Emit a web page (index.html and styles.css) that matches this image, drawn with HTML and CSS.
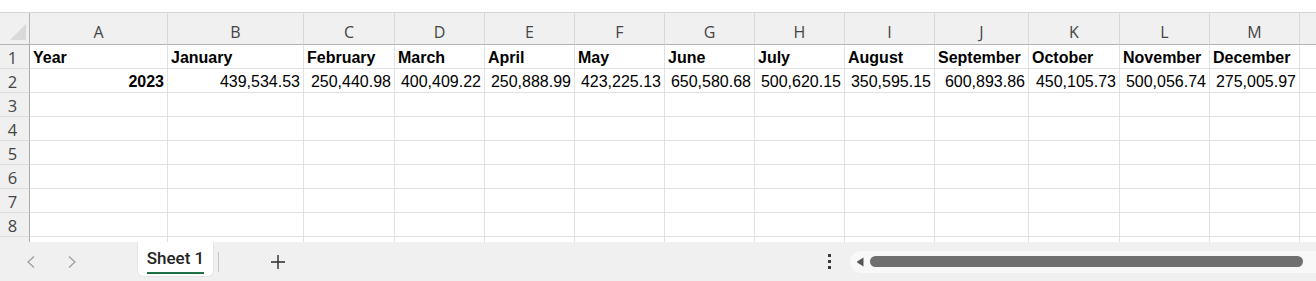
FILE: index.html
```html
<!DOCTYPE html>
<html lang="en">
<head>
  <meta charset="UTF-8" />
  <title>Sheet 1</title>
  <link rel="stylesheet" href="styles.css">
</head>
<body>

  <div class="sheet">
    <div class="grid">
      <!-- column letters -->
      <div class="grid-row head-row">
        <div class="corner">
          <svg width="16" height="16" viewBox="0 0 16 16"><polygon points="16,0 16,16 0,16" fill="#d9d9d9"/></svg>
        </div>
        <div>A</div><div>B</div><div>C</div><div>D</div><div>E</div><div>F</div><div>G</div>
        <div>H</div><div>I</div><div>J</div><div>K</div><div>L</div><div>M</div><div></div>
      </div>

      <div class="grid-row">
        <div class="rh">1</div>
        <div class="bold">Year</div>
        <div class="bold">January</div>
        <div class="bold">February</div>
        <div class="bold">March</div>
        <div class="bold">April</div>
        <div class="bold">May</div>
        <div class="bold">June</div>
        <div class="bold">July</div>
        <div class="bold">August</div>
        <div class="bold">September</div>
        <div class="bold">October</div>
        <div class="bold">November</div>
        <div class="bold">December</div>
        <div></div>
      </div>

      <div class="grid-row">
        <div class="rh">2</div>
        <div class="bold num">2023</div>
        <div class="num">439,534.53</div>
        <div class="num">250,440.98</div>
        <div class="num">400,409.22</div>
        <div class="num">250,888.99</div>
        <div class="num">423,225.13</div>
        <div class="num">650,580.68</div>
        <div class="num">500,620.15</div>
        <div class="num">350,595.15</div>
        <div class="num">600,893.86</div>
        <div class="num">450,105.73</div>
        <div class="num">500,056.74</div>
        <div class="num">275,005.97</div>
        <div></div>
      </div>

      <div class="grid-row">
        <div class="rh">3</div>
        <div></div><div></div><div></div><div></div><div></div><div></div><div></div>
        <div></div><div></div><div></div><div></div><div></div><div></div><div></div>
      </div>
      <div class="grid-row">
        <div class="rh">4</div>
        <div></div><div></div><div></div><div></div><div></div><div></div><div></div>
        <div></div><div></div><div></div><div></div><div></div><div></div><div></div>
      </div>
      <div class="grid-row">
        <div class="rh">5</div>
        <div></div><div></div><div></div><div></div><div></div><div></div><div></div>
        <div></div><div></div><div></div><div></div><div></div><div></div><div></div>
      </div>
      <div class="grid-row">
        <div class="rh">6</div>
        <div></div><div></div><div></div><div></div><div></div><div></div><div></div>
        <div></div><div></div><div></div><div></div><div></div><div></div><div></div>
      </div>
      <div class="grid-row">
        <div class="rh">7</div>
        <div></div><div></div><div></div><div></div><div></div><div></div><div></div>
        <div></div><div></div><div></div><div></div><div></div><div></div><div></div>
      </div>
      <div class="grid-row">
        <div class="rh">8</div>
        <div></div><div></div><div></div><div></div><div></div><div></div><div></div>
        <div></div><div></div><div></div><div></div><div></div><div></div><div></div>
      </div>
      <!-- row 9, cut off by the tab bar -->
      <div class="grid-row cut-row">
        <div class="rh"></div>
        <div></div><div></div><div></div><div></div><div></div><div></div><div></div>
        <div></div><div></div><div></div><div></div><div></div><div></div><div></div>
      </div>
    </div>

    <!-- sheet tabs + horizontal scroll -->
    <div class="tabbar">
      <div class="nav">
        <svg width="8" height="12" viewBox="0 0 8 12"><polyline points="7,0.5 1,6 7,11.5" fill="none" stroke="#9b9b9b" stroke-width="1.2"/></svg>
        <svg width="8" height="12" viewBox="0 0 8 12"><polyline points="1,0.5 7,6 1,11.5" fill="none" stroke="#9b9b9b" stroke-width="1.2"/></svg>
      </div>
      <div class="tab"><span>Sheet 1</span></div>
      <div class="tab-sep"></div>
      <div class="add-sheet">
        <svg width="14" height="14" viewBox="0 0 14 14"><path d="M7 0v14M0 7h14" stroke="#2b2b2b" stroke-width="1.4"/></svg>
      </div>
      <div class="more">
        <svg width="3" height="15" viewBox="0 0 3 15"><rect x="0" y="0" width="3" height="3" fill="#3a3a3a"/><rect x="0" y="6" width="3" height="3" fill="#3a3a3a"/><rect x="0" y="12" width="3" height="3" fill="#3a3a3a"/></svg>
      </div>
      <div class="hscroll">
        <svg class="hscroll-arrow" width="8" height="10" viewBox="0 0 8 10"><path d="M7.5 0.5v9L1.5 5.8a1 1 0 0 1 0-1.6z" fill="#575757"/></svg>
        <div class="hscroll-thumb"></div>
      </div>
    </div>
  </div>

</body>
</html>
```

FILE: styles.css
```css
body {
  margin: 0;
  background: #fff;
  overflow: hidden;
}

.sheet {
  width: 1316px;
  height: 281px;
  display: flex;
  flex-direction: column;
}

/* Grid */
.grid {
  margin-top: 12px;
  border-top: 1px solid #d6d6d6;
}

.grid-row {
  display: grid;
  grid-template-columns: 30px 138px 136px 91px 90px 90px 90px 90px 90px 90px 94px 91px 90px 90px 1fr;
}

.grid-row > div {
  box-sizing: border-box;
  height: 24px;
  border-right: 1px solid #e1e1e1;
  border-bottom: 1px solid #e1e1e1;
  padding: 2px 3px 0;
  font-family: "Liberation Sans", Arial, sans-serif;
  font-size: 16px;
  line-height: 21px;
  color: #000;
  white-space: nowrap;
  overflow: hidden;
}

.grid-row > div:last-child {
  border-right: none;
}

.bold { font-weight: bold; }
.num { text-align: right; }

/* Column letters */
.head-row > div {
  height: 32px;
  background: #f0f0f0;
  border-right-color: #d8d8d8;
  border-bottom: 1px solid #b4b4b4;
  display: flex;
  align-items: flex-end;
  justify-content: center;
  padding: 0 0 2px;
  font-family: "Open Sans", sans-serif;
  font-size: 16px;
  line-height: 20px;
  color: #444;
}

.head-row > .corner {
  justify-content: flex-end;
  padding: 0 3px 4px 0;
  border-right-color: #b4b4b4;
}

/* Row numbers */
.grid-row > .rh {
  background: #f0f0f0;
  border-right-color: #a9a9a9;
  border-bottom-color: #dadada;
  text-align: center;
  padding: 2px 4px 0 0;
  font-family: "Open Sans", sans-serif;
  font-size: 16.5px;
  color: #444;
}

.cut-row > div {
  height: 5px;
  border-bottom: none;
}

/* Tab bar */
.tabbar {
  flex: 1;
  background: #f0f0f0;
  display: flex;
  align-items: center;
}

.nav {
  display: flex;
  gap: 33px;
  margin-left: 27px;
}

.tab {
  align-self: flex-start;
  box-sizing: border-box;
  width: 77px;
  height: 35px;
  margin-left: 61px;
  padding-top: 6px;
  background: #fff;
  border: 1px solid #e4e4e4;
  border-top: none;
  border-radius: 0 0 6px 6px;
  text-align: center;
}

.tab span {
  display: inline-block;
  font-family: Roboto, sans-serif;
  font-weight: 500;
  font-size: 17px;
  line-height: 20px;
  color: #242424;
  padding-bottom: 4px;
  border-bottom: 2px solid #1e7145;
}

.tab-sep {
  width: 1px;
  height: 20px;
  margin-left: 4px;
  background: #c6c6c6;
}

.add-sheet {
  display: flex;
  margin-left: 52px;
}

.more {
  display: flex;
  margin-left: auto;
  margin-right: 19px;
}

.hscroll {
  width: 466px;
  height: 22px;
  background: #f8f8f8;
  border-radius: 11px 0 0 11px;
  display: flex;
  align-items: center;
}

.hscroll-arrow {
  margin-left: 6px;
}

.hscroll-thumb {
  width: 433px;
  height: 11px;
  margin-left: 6px;
  border-radius: 6px;
  background: #6f6f6f;
}
```
